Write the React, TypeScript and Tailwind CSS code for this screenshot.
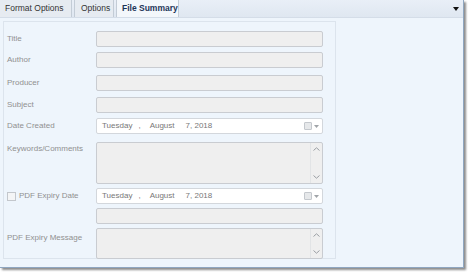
import React from 'react';

const font = { fontFamily: '"Liberation Sans", Arial, sans-serif' };

function Label({ children }: { children: React.ReactNode }) {
  return <div className="w-[92px] shrink-0 pl-[3px] text-[8px] text-[#909090] leading-none">{children}</div>;
}

function TextBox({ h }: { h: number }) {
  return (
    <div
      className="w-[227px] rounded-[2px] border border-[#c9ccd1] bg-[#efefef]"
      style={{ height: h }}
    />
  );
}

function DateBox() {
  return (
    <div className="flex h-[16px] w-[227px] items-center rounded-[2px] border border-[#d3d7dc] bg-white pl-[5px] pr-[3px] text-[8px] text-[#777]">
      <span>Tuesday</span>
      <span className="ml-[6px]">,</span>
      <span className="ml-[9px]">August</span>
      <span className="ml-[11px]">7, 2018</span>
      <div className="ml-auto flex items-center gap-[2px]">
        <div className="h-[8px] w-[8px] rounded-[1px] border border-[#c4c8cd] bg-[#e6e8ea]" />
        <svg width="5" height="3" viewBox="0 0 5 3">
          <path d="M0 0 L5 0 L2.5 3 Z" fill="#a0a4a8" />
        </svg>
      </div>
    </div>
  );
}

function ScrollBox({ h }: { h: number }) {
  return (
    <div
      className="flex w-[227px] rounded-[2px] border border-[#c9ccd1] bg-[#efefef]"
      style={{ height: h }}
    >
      <div className="flex-1" />
      <div className="flex w-[12px] flex-col items-center justify-between border-l border-[#e2e4e6] py-[4px]">
        <svg width="7" height="4" viewBox="0 0 7 4">
          <path d="M0.5 3.5 L3.5 0.8 L6.5 3.5" fill="none" stroke="#9a9ea3" strokeWidth="1" />
        </svg>
        <svg width="7" height="4" viewBox="0 0 7 4">
          <path d="M0.5 0.5 L3.5 3.2 L6.5 0.5" fill="none" stroke="#9a9ea3" strokeWidth="1" />
        </svg>
      </div>
    </div>
  );
}

export default function App() {
  return (
    <div className="h-[278px] w-[474px] bg-white" style={font}>
      <div className="flex h-[268px] w-[464px] flex-col border-r border-b border-[#8fa6c0] bg-[#eef5fc] shadow-[2px_2px_2px_rgba(0,0,0,0.45)]">
        {/* Tab strip */}
        <div className="flex h-[18px] items-end border-b border-[#d4dde8] bg-gradient-to-b from-[#e9eff7] to-[#dfe7f1]">
          <div className="flex h-[17px] w-[72px] items-center border-r border-[#c3ccd6] bg-[#e6ebf1] pl-[5px] text-[8.5px] text-[#333]">
            Format Options
          </div>
          <div className="ml-[2px] flex h-[17px] w-[40px] items-center border-x border-[#c3ccd6] bg-[#e6ebf1] pl-[6px] text-[8.5px] text-[#333]">
            Options
          </div>
          <div className="ml-[2px] flex h-[18px] w-[63px] items-center border-x border-[#c3ccd6] bg-[#f3f7fb] pl-[5px] text-[8.5px] font-bold text-[#1d3557]">
            File Summary
          </div>
          <div className="flex flex-1 items-center justify-end self-stretch pr-[4px]">
            <svg width="6" height="4" viewBox="0 0 6 4">
              <path d="M0 0 L6 0 L3 4 Z" fill="#111" />
            </svg>
          </div>
        </div>

        {/* Body */}
        <div className="px-[3px] pt-[3px]">
          <div className="flex h-[238px] w-[333px] flex-col border border-[#dce4ed] bg-[#eef5fc] pt-[9px]">
            <div className="flex items-center">
              <Label>Title</Label>
              <TextBox h={16} />
            </div>
            <div className="mt-[5px] flex items-center">
              <Label>Author</Label>
              <TextBox h={16} />
            </div>
            <div className="mt-[7px] flex items-center">
              <Label>Producer</Label>
              <TextBox h={16} />
            </div>
            <div className="mt-[6px] flex items-center">
              <Label>Subject</Label>
              <TextBox h={16} />
            </div>
            <div className="mt-[5px] flex items-center">
              <Label>Date Created</Label>
              <DateBox />
            </div>
            <div className="mt-[8px] flex items-start">
              <div className="pt-[3px]">
                <Label>Keywords/Comments</Label>
              </div>
              <ScrollBox h={42} />
            </div>
            <div className="mt-[4px] flex items-center">
              <div className="flex w-[92px] shrink-0 items-center pl-[3px] text-[8px] text-[#909090] leading-none">
                <div className="mr-[3px] h-[9px] w-[9px] border border-[#c3c7cc] bg-[#f4f5f6]" />
                PDF Expiry Date
              </div>
              <DateBox />
            </div>
            <div className="mt-[4px] flex items-center">
              <div className="w-[92px] shrink-0" />
              <TextBox h={16} />
            </div>
            <div className="mt-[4px] flex items-start">
              <div className="pt-[6px]">
                <Label>PDF Expiry Message</Label>
              </div>
              <ScrollBox h={31} />
            </div>
          </div>
        </div>
      </div>
    </div>
  );
}
